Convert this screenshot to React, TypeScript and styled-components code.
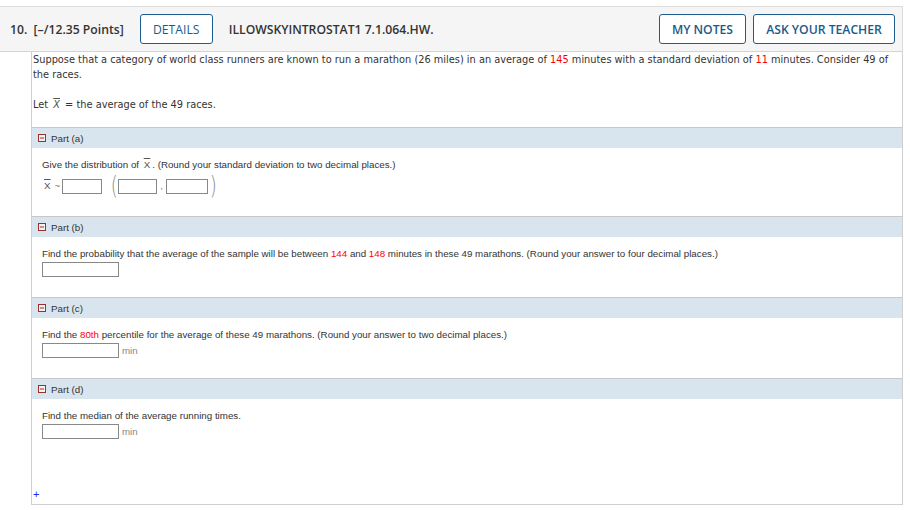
import React from "react";
import styled, { createGlobalStyle } from "styled-components";

const Global = createGlobalStyle`
  html, body { margin: 0; padding: 0; background: #fff; }
  body { font-family: "Liberation Sans", Arial, sans-serif; }
`;

const Page = styled.div`
  width: 903px;
  padding-top: 6px;
`;

const Header = styled.div`
  display: flex;
  align-items: center;
  height: 44px;
  background: #f5f5f5;
  border-top: 1px solid #dcdcdc;
  border-right: 1px solid #dcdcdc;
  border-bottom: 1px solid #d4d4d4;
  padding: 0 7px 0 10px;
  font-family: "Open Sans", sans-serif;
  font-size: 12.2px;
  color: #333;
`;

const Points = styled.span`
  font-weight: 600;
  white-space: pre;
  margin-right: 16px;
`;

const Code = styled.span`
  font-weight: 600;
  margin-left: 16px;
  flex: 1;
`;

const HeadButton = styled.button<{ $w: number; $weight?: number }>`
  box-sizing: border-box;
  width: ${(p) => p.$w}px;
  height: 30px;
  background: #fff;
  border: 1px solid #1f5d8e;
  border-radius: 3px;
  color: #1b5a8c;
  font-family: "Open Sans", sans-serif;
  font-size: 12.2px;
  font-weight: ${(p) => p.$weight ?? 500};
  padding: 0;
  & + & { margin-left: 7px; }
`;

const Panel = styled.div`
  margin-left: 31px;
  border-left: 1px solid #cfcfcf;
  border-right: 1px solid #cfcfcf;
  border-bottom: 1px solid #cfcfcf;
`;

const Intro = styled.p`
  margin: 0 0 15px;
  padding: 0 10px 0 1px;
  font-family: "DejaVu Sans", Verdana, sans-serif;
  font-size: 9.8px;
  line-height: 15px;
  color: #333;
`;

const Red = styled.span`
  color: #f00;
`;

const XBar = styled.span<{ $italic?: boolean; $m?: number }>`
  text-decoration: overline;
  font-style: ${(p) => (p.$italic ? "italic" : "normal")};
  margin: 0 ${(p) => p.$m ?? 2}px;
  color: #555;
`;

const PartHead = styled.div`
  display: flex;
  align-items: center;
  gap: 5px;
  height: 20px;
  background: #d9e5ee;
  border-top: 1px solid #c8c8c8;
  padding-left: 6px;
  font-size: 9.75px;
  color: #333;
`;

const PartBody = styled.div<{ $bottom?: number }>`
  padding: 10px 10px ${(p) => p.$bottom ?? 20}px 10px;
  font-size: 9.75px;
  line-height: 14px;
  color: #333;
`;

const Row = styled.div`
  display: flex;
  align-items: center;
  gap: 3px;
  margin-top: 1px;
  height: 15px;
  color: #666;
`;

const DistRow = styled.div`
  display: flex;
  align-items: center;
  height: 20px;
  margin-top: 4px;
  padding-left: 2px;
  color: #777;
`;

const Gap = styled.span<{ $w: number }>`
  display: inline-block;
  flex: none;
  width: ${(p) => p.$w}px;
`;

const Box = styled.span<{ $w: number }>`
  box-sizing: border-box;
  display: inline-block;
  flex: none;
  width: ${(p) => p.$w}px;
  height: 15px;
  border: 1px solid #888;
  background: #fff;
`;

const Paren = styled.span`
  display: inline-block;
  width: 6px;
  font-size: 24px;
  line-height: 20px;
  color: #8a8a8a;
  font-family: "DejaVu Sans", sans-serif;
  font-weight: 300;
  text-align: center;
  transform: scaleX(0.75);
`;

const Unit = styled.span`
  color: #888;
  margin-top: 1px;
`;

const Plus = styled.div`
  padding: 28px 0 3px 1px;
  color: #22f;
  font-size: 11px;
  line-height: 14px;
`;

const MinusIcon = () => (
  <svg width="8" height="8" viewBox="0 0 8 8">
    <rect x="0.5" y="0.5" width="7" height="7" fill="#f2f2f2" stroke="#9c2f2f" />
    <line x1="2" y1="4" x2="6" y2="4" stroke="#9c2f2f" />
  </svg>
);

const Part = ({ label }: { label: string }) => (
  <PartHead>
    <MinusIcon />
    <span>Part ({label})</span>
  </PartHead>
);

export default function App() {
  return (
    <Page>
      <Global />
      <Header>
        <Points>{"10.  [–/12.35 Points]"}</Points>
        <HeadButton $w={73}>DETAILS</HeadButton>
        <Code>ILLOWSKYINTROSTAT1 7.1.064.HW.</Code>
        <HeadButton $w={87} $weight={600}>MY NOTES</HeadButton>
        <HeadButton $w={142} $weight={600}>ASK YOUR TEACHER</HeadButton>
      </Header>
      <Panel>
        <Intro>
          Suppose that a category of world class runners are known to run a marathon (26 miles) in an average of{" "}
          <Red>145</Red> minutes with a standard deviation of <Red>11</Red> minutes. Consider 49 of the races.
        </Intro>
        <Intro>
          Let <XBar $italic>X</XBar> = the average of the 49 races.
        </Intro>

        <Part label="a" />
        <PartBody>
          <div>
            Give the distribution of <XBar>X</XBar>. (Round your standard deviation to two decimal places.)
          </div>
          <DistRow>
            <XBar $m={0}>X</XBar>
            <Gap $w={4} />
            <span>~</span>
            <Gap $w={2} />
            <Box $w={40} />
            <Gap $w={8} />
            <Paren>(</Paren>
            <Gap $w={2} />
            <Box $w={39} />
            <Gap $w={3} />
            <span>,</span>
            <Gap $w={3} />
            <Box $w={42} />
            <Gap $w={1} />
            <Paren>)</Paren>
          </DistRow>
        </PartBody>

        <Part label="b" />
        <PartBody>
          <div>
            Find the probability that the average of the sample will be between <Red>144</Red> and <Red>148</Red> minutes
            in these 49 marathons. (Round your answer to four decimal places.)
          </div>
          <Row>
            <Box $w={77} />
          </Row>
        </PartBody>

        <Part label="c" />
        <PartBody>
          <div>
            Find the <Red>80th</Red> percentile for the average of these 49 marathons. (Round your answer to two decimal
            places.)
          </div>
          <Row>
            <Box $w={77} />
            <Unit>min</Unit>
          </Row>
        </PartBody>

        <Part label="d" />
        <PartBody>
          <div>Find the median of the average running times.</div>
          <Row>
            <Box $w={77} />
            <Unit>min</Unit>
          </Row>
        </PartBody>
        <Plus>+</Plus>
      </Panel>
    </Page>
  );
}
